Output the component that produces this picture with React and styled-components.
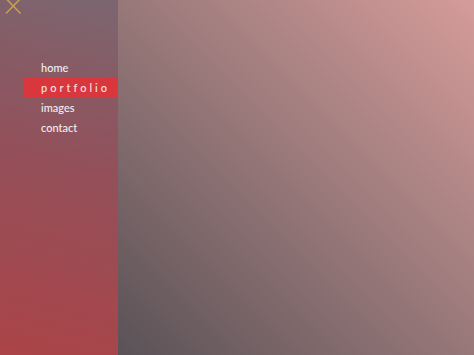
import React from "react";
import styled, { createGlobalStyle } from "styled-components";

const Global = createGlobalStyle`
  html, body { margin: 0; padding: 0; height: 100%; overflow: hidden; }
  body { font-family: "Lato", "Open Sans", sans-serif; }
  #root { height: 100%; }
`;

const Page = styled.div`
  display: flex;
  width: 100vw;
  height: 100vh;
`;

const Sidebar = styled.aside`
  position: relative;
  width: 118px;
  flex: 0 0 118px;
  background: linear-gradient(15deg, #ab4448 0%, #93505a 55%, #7b6670 100%);
  padding-top: 58px;
  box-sizing: border-box;
`;

const CloseButton = styled.button`
  position: absolute;
  left: 5px;
  top: 0;
  width: 18px;
  height: 15px;
  padding: 0;
  border: 0;
  background: none;
  cursor: pointer;
  svg { display: block; }
`;

const Menu = styled.ul`
  list-style: none;
  margin: 0 0 0 23px;
  padding: 0;
  display: flex;
  flex-direction: column;
`;

const Item = styled.li`
  height: 20px;
  line-height: 20px;
  padding-left: 18px;
  font-size: 11px;
  font-weight: 500;
  color: ${(p) => (p.$active ? "#f6e0e0" : "#f2eeee")};
  background: ${(p) => (p.$active ? "#d9363d" : "transparent")};
  letter-spacing: ${(p) => (p.$active ? "3px" : "0")};
  ${(p) => p.$active && "margin-top: -1px; height: 21px; line-height: 21px; margin-right: 1px;"}
`;

const Main = styled.main`
  flex: 1;
  background: linear-gradient(to top right, #5a5257 0%, #987879 50%, #d59c9a 100%);
`;

export default function App() {
  return (
    <>
      <Global />
      <Page>
        <Sidebar>
          <CloseButton aria-label="close">
            <svg width="18" height="15" viewBox="0 0 18 15">
              <path d="M1 -1.5 L15.5 13.5 M15.5 -1.5 L1 13.5" stroke="#c9a34c" strokeWidth="1.5" fill="none" />
            </svg>
          </CloseButton>
          <Menu>
            <Item>home</Item>
            <Item $active>portfolio</Item>
            <Item>images</Item>
            <Item>contact</Item>
          </Menu>
        </Sidebar>
        <Main />
      </Page>
    </>
  );
}
